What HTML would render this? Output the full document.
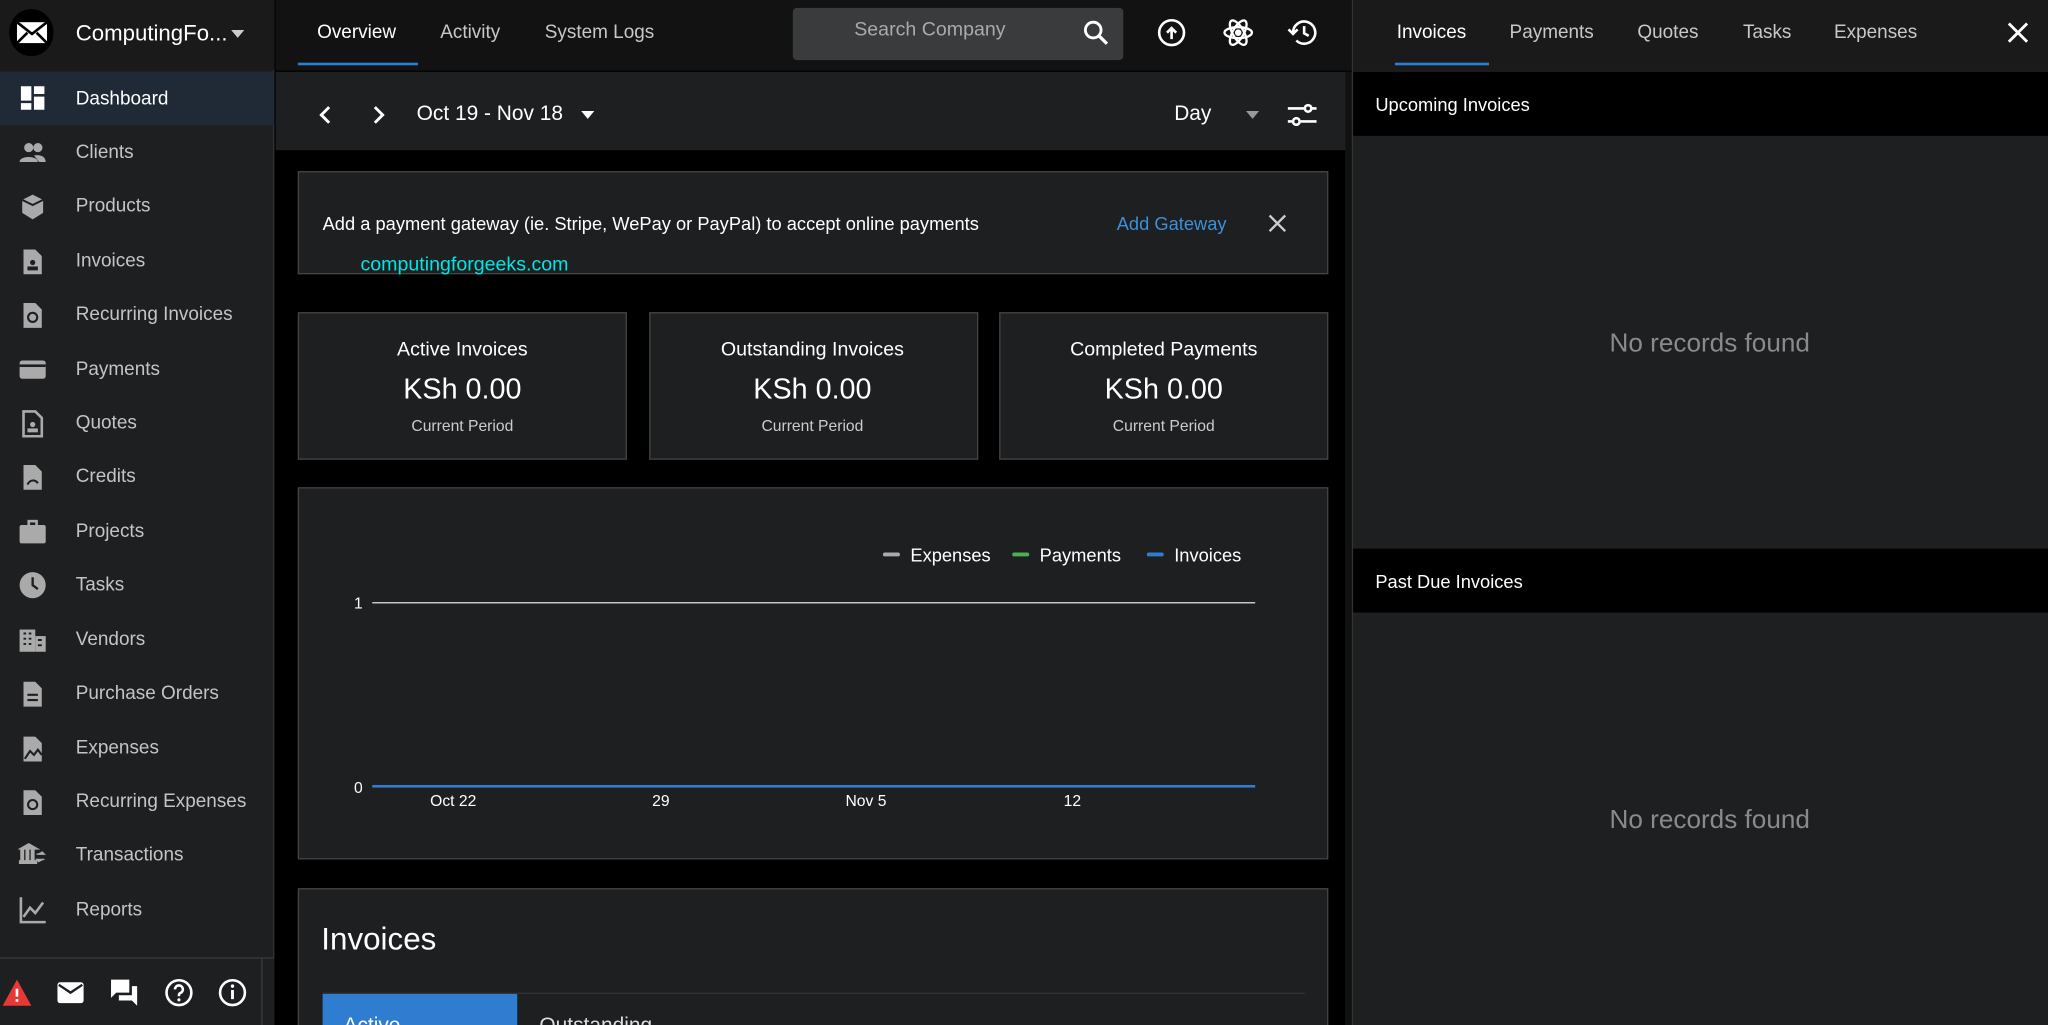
<!DOCTYPE html>
<html><head><meta charset="utf-8"><style>
*{box-sizing:border-box;margin:0;padding:0}
html,body{width:2048px;height:1025px;overflow:hidden;background:#000}
#w{position:absolute;left:0;top:0;width:1568px;height:785px;transform:scale(1.306122);transform-origin:0 0;font-family:"Liberation Sans",sans-serif;color:#fff;overflow:hidden;background:#000}
.a{position:absolute}
.t{position:absolute;white-space:nowrap;line-height:1}
.side{left:0;top:0;width:210px;height:785px;background:#1e1f21;border-right:1px solid #333}
.mi{position:absolute;left:58px;font-size:14.5px;color:#c4c4c4;transform:translateY(-50%)}
.ic{position:absolute;left:14px;width:22px;height:22px;transform:translateY(-50%)}
.card{position:absolute;background:#1e1f21;border:1px solid #444}
.tab{position:absolute;font-size:14.5px;color:#c8c8c8;top:25px;transform:translate(-50%,-50%);white-space:nowrap}
</style></head><body><div id="w">
<!-- sidebar -->
<div class="a side">
 <div class="a" style="left:0;top:0;width:210px;height:54px;background:#1a1a1b"></div>
 <div class="a" style="left:7px;top:7px;width:34px;height:36px;border-radius:50%;background:#000"></div>
 <svg class="a" style="left:12px;top:16px" width="25" height="18" viewBox="0 0 25 18"><rect x="1" y="1" width="23" height="16" fill="#fff"/><path d="M1 1 L12.5 10 L24 1 M1 17 L9 9 M24 17 L16 9" stroke="#000" stroke-width="2" fill="none"/></svg>
 <div class="t" style="left:58px;top:17px;font-size:17px;color:#fff">ComputingFo...</div>
 <div class="a" style="left:177px;top:23px;border:5px solid transparent;border-top:6px solid #ccc"></div>
 <div class="a" style="left:0;top:55px;width:210px;height:41px;background:#1f2a36"></div>
 <svg class="ic" style="top:75px" viewBox="0 0 22 22"><path d="M2 2h8v11H2zM12 2h8v6h-8zM12 10h8v10h-8zM2 15h8v5H2z" fill="#fff"/></svg>
 <div class="mi" style="top:76px;color:#fff">Dashboard</div>
 <svg class="ic" style="top:117px" viewBox="0 0 22 22"><circle cx="8" cy="7" r="3.5" fill="#aaa"/><circle cx="15" cy="7" r="3.5" fill="#aaa"/><path d="M1 18c0-5 14-5 14 0zM12 13c5-1 9 1 9 5h-5z" fill="#aaa"/></svg>
 <div class="mi" style="top:117px">Clients</div>
 <svg class="ic" style="top:158px" viewBox="0 0 22 22"><path d="M11 2l8 4v10l-8 5-8-5V6z" fill="#aaa"/><path d="M3 6l8 4 8-4" stroke="#1e1f21" stroke-width="1.5" fill="none"/></svg>
 <div class="mi" style="top:158px">Products</div>
 <svg class="ic" style="top:200px" viewBox="0 0 22 22"><path d="M4 2h9l5 5v14H4z" fill="#aaa"/><circle cx="11" cy="12" r="2" fill="#1e1f21"/><rect x="7" y="15" width="8" height="3" fill="#1e1f21"/></svg>
 <div class="mi" style="top:200px">Invoices</div>
 <svg class="ic" style="top:241px" viewBox="0 0 22 22"><path d="M4 2h9l5 5v14H4z" fill="#aaa"/><circle cx="11" cy="13" r="3.5" stroke="#1e1f21" stroke-width="1.6" fill="none"/></svg>
 <div class="mi" style="top:241px">Recurring Invoices</div>
 <svg class="ic" style="top:283px" viewBox="0 0 22 22"><rect x="1" y="4" width="20" height="14" rx="2" fill="#aaa"/><rect x="1" y="7" width="20" height="2" fill="#1e1f21"/></svg>
 <div class="mi" style="top:283px">Payments</div>
 <svg class="ic" style="top:324px" viewBox="0 0 22 22"><path d="M4 2h9l5 5v14H4z" fill="none" stroke="#aaa" stroke-width="2"/><circle cx="11" cy="12" r="2" fill="#aaa"/><rect x="7" y="15" width="8" height="3" fill="#aaa"/></svg>
 <div class="mi" style="top:324px">Quotes</div>
 <svg class="ic" style="top:365px" viewBox="0 0 22 22"><path d="M4 2h9l5 5v14H4z" fill="#aaa"/><path d="M7 17c2-4 6-4 8-1" stroke="#1e1f21" stroke-width="1.6" fill="none"/></svg>
 <div class="mi" style="top:365px">Credits</div>
 <svg class="ic" style="top:407px" viewBox="0 0 22 22"><rect x="1" y="6" width="20" height="14" rx="1.5" fill="#aaa"/><rect x="8" y="3" width="6" height="4" fill="none" stroke="#aaa" stroke-width="2"/></svg>
 <div class="mi" style="top:407px">Projects</div>
 <svg class="ic" style="top:448px" viewBox="0 0 22 22"><circle cx="11" cy="11" r="10" fill="#aaa"/><path d="M11 5v6l4 3" stroke="#1e1f21" stroke-width="1.8" fill="none"/></svg>
 <div class="mi" style="top:448px">Tasks</div>
 <svg class="ic" style="top:490px" viewBox="0 0 22 22"><rect x="1" y="3" width="12" height="17" fill="#aaa"/><rect x="13" y="8" width="8" height="12" fill="#aaa"/><path d="M4 6h2M8 6h2M4 10h2M8 10h2M4 14h2M8 14h2M15 11h3M15 15h3" stroke="#1e1f21" stroke-width="1.5"/></svg>
 <div class="mi" style="top:490px">Vendors</div>
 <svg class="ic" style="top:531px" viewBox="0 0 22 22"><path d="M4 2h9l5 5v14H4z" fill="#aaa"/><path d="M7 12h8M7 16h8" stroke="#1e1f21" stroke-width="1.6"/></svg>
 <div class="mi" style="top:531px">Purchase Orders</div>
 <svg class="ic" style="top:573px" viewBox="0 0 22 22"><path d="M4 2h9l5 5v14H4z" fill="#aaa"/><path d="M5 19l4-6 3 3 3-4 3 4" stroke="#1e1f21" stroke-width="1.6" fill="none"/></svg>
 <div class="mi" style="top:573px">Expenses</div>
 <svg class="ic" style="top:614px" viewBox="0 0 22 22"><path d="M4 2h9l5 5v14H4z" fill="#aaa"/><circle cx="11" cy="13" r="3.5" stroke="#1e1f21" stroke-width="1.6" fill="none"/></svg>
 <div class="mi" style="top:614px">Recurring Expenses</div>
 <svg class="ic" style="top:655px" viewBox="0 0 22 22"><path d="M1 6l7-4 7 4zM2 7h2v7H2zM6 7h2v7H6zM10 7h2v7h-2zM1 15h13v2H1zM14 10h6l-2-2M20 14h-6l2 2" fill="#aaa" stroke="#aaa" stroke-width="1"/></svg>
 <div class="mi" style="top:655px">Transactions</div>
 <svg class="ic" style="top:697px" viewBox="0 0 22 22"><path d="M2 1v19h19M4 16l5-7 4 4 6-8" stroke="#aaa" stroke-width="2" fill="none"/></svg>
 <div class="mi" style="top:697px">Reports</div>
 <div class="a" style="left:0;top:733px;width:210px;height:52px;background:#1e1f21;border-top:1px solid #3a3a3a"></div>
 <div class="a" style="left:200px;top:733px;width:1px;height:52px;background:#3a3a3a"></div>
 <svg class="a" style="left:1px;top:749px" width="24" height="22" viewBox="0 0 24 22"><path d="M12 1L23 21H1z" fill="#e53935"/><path d="M12 8v6M12 16v2" stroke="#fff" stroke-width="2"/></svg>
 <svg class="a" style="left:43px;top:751px" width="22" height="18" viewBox="0 0 22 18"><rect x="1" y="1" width="20" height="16" rx="2" fill="#fff"/><path d="M2 3l9 6 9-6" stroke="#1e1f21" stroke-width="1.8" fill="none"/></svg>
 <svg class="a" style="left:84px;top:749px" width="22" height="22" viewBox="0 0 22 22"><path d="M1 1h14v10H5l-4 4z" fill="#fff"/><path d="M17 6h4v15l-4-4H7v-4h10z" fill="#fff"/></svg>
 <svg class="a" style="left:126px;top:749px" width="22" height="22" viewBox="0 0 22 22"><circle cx="11" cy="11" r="9.5" stroke="#fff" stroke-width="2" fill="none"/><path d="M8 8.5a3 3 0 1 1 4 2.8c-1 .5-1 1-1 2.5" stroke="#fff" stroke-width="2" fill="none"/><circle cx="11" cy="16.5" r="1.2" fill="#fff"/></svg>
 <svg class="a" style="left:167px;top:749px" width="22" height="22" viewBox="0 0 22 22"><circle cx="11" cy="11" r="9.5" stroke="#fff" stroke-width="2" fill="none"/><path d="M11 9v7" stroke="#fff" stroke-width="2.2"/><circle cx="11" cy="6" r="1.3" fill="#fff"/></svg>
</div>
<!-- main top -->
<div class="a" style="left:211px;top:0;width:824px;height:54px;background:#121212"></div>
<div class="tab" style="left:273px;color:#fff">Overview</div>
<div class="a" style="left:228px;top:48px;width:92px;height:2px;background:#2f7dd1"></div>
<div class="tab" style="left:360px">Activity</div>
<div class="tab" style="left:459px">System Logs</div>
<div class="a" style="left:607px;top:6px;width:253px;height:40px;background:#3a3b3d;border-radius:3px"></div>
<div class="t" style="left:654px;top:15px;font-size:15px;color:#aaa">Search Company</div>
<svg class="a" style="left:828px;top:14px" width="22" height="22" viewBox="0 0 22 22"><circle cx="9" cy="9" r="6" stroke="#fff" stroke-width="2.2" fill="none"/><path d="M13.5 13.5l6 6" stroke="#fff" stroke-width="2.5"/></svg>
<svg class="a" style="left:886px;top:14px" width="22" height="22" viewBox="0 0 22 22"><circle cx="11" cy="11" r="9.5" stroke="#fff" stroke-width="2" fill="none"/><path d="M11 16V8M7.5 11L11 7.5 14.5 11" stroke="#fff" stroke-width="2" fill="none"/></svg>
<svg class="a" style="left:936px;top:13px" width="24" height="24" viewBox="0 0 24 24" fill="none" stroke="#fff" stroke-width="1.8"><ellipse cx="12" cy="12" rx="10.5" ry="4.2"/><ellipse cx="12" cy="12" rx="10.5" ry="4.2" transform="rotate(60 12 12)"/><ellipse cx="12" cy="12" rx="10.5" ry="4.2" transform="rotate(120 12 12)"/><circle cx="12" cy="12" r="1.6" fill="#fff"/></svg>
<svg class="a" style="left:985px;top:14px" width="24" height="22" viewBox="0 0 24 22" fill="none" stroke="#fff" stroke-width="2"><path d="M5 11a8.5 8.5 0 1 1 2.5 6"/><path d="M1.5 8.5L5 12l3.5-3.5"/><path d="M13.5 6v5.5l3.5 2"/></svg>
<!-- sub bar -->
<div class="a" style="left:211px;top:55px;width:824px;height:60px;background:#1e1f21"></div>
<svg class="a" style="left:242px;top:80px" width="14" height="16" viewBox="0 0 14 16"><path d="M10 2L4 8l6 6" stroke="#fff" stroke-width="2.2" fill="none"/></svg>
<svg class="a" style="left:283px;top:80px" width="14" height="16" viewBox="0 0 14 16"><path d="M4 2l6 6-6 6" stroke="#fff" stroke-width="2.2" fill="none"/></svg>
<div class="t" style="left:319px;top:80px;font-size:16px">Oct 19 - Nov 18</div>
<div class="a" style="left:445px;top:85px;border:5.5px solid transparent;border-top:6px solid #fff"></div>
<div class="t" style="left:899px;top:80px;font-size:16px">Day</div>
<div class="a" style="left:954px;top:85px;border:5.5px solid transparent;border-top:6px solid #999"></div>
<svg class="a" style="left:985px;top:77px" width="24" height="22" viewBox="0 0 24 22" fill="none" stroke="#fff" stroke-width="2"><path d="M1 6h13M19 6h4M1 16h4M10 16h13"/><circle cx="16.5" cy="6" r="2.5"/><circle cx="7.5" cy="16" r="2.5"/></svg>
<div class="a" style="left:1030px;top:55px;width:5px;height:730px;background:#111"></div>
<!-- banner -->
<div class="card" style="left:228px;top:131px;width:789px;height:79px"></div>
<div class="t" style="left:247px;top:164px;font-size:14px">Add a payment gateway (ie. Stripe, WePay or PayPal) to accept online payments</div>
<div class="t" style="left:855px;top:164px;font-size:14px;color:#3d8fd6">Add Gateway</div>
<svg class="a" style="left:970px;top:163px" width="16" height="16" viewBox="0 0 16 16"><path d="M2 2l12 12M14 2L2 14" stroke="#ccc" stroke-width="1.8"/></svg>
<div class="t" style="left:276px;top:195px;font-size:15px;color:#00e5e5">computingforgeeks.com</div>
<!-- stat cards -->
<div class="card" style="left:228px;top:239px;width:252px;height:113px"></div>
<div class="card" style="left:497px;top:239px;width:252px;height:113px"></div>
<div class="card" style="left:765px;top:239px;width:252px;height:113px"></div>
<div class="t" style="left:354px;top:260px;font-size:15px;transform:translateX(-50%)">Active Invoices</div>
<div class="t" style="left:354px;top:287px;font-size:22px;transform:translateX(-50%)">KSh 0.00</div>
<div class="t" style="left:354px;top:320px;font-size:12px;color:#ccc;transform:translateX(-50%)">Current Period</div>
<div class="t" style="left:622px;top:260px;font-size:15px;transform:translateX(-50%)">Outstanding Invoices</div>
<div class="t" style="left:622px;top:287px;font-size:22px;transform:translateX(-50%)">KSh 0.00</div>
<div class="t" style="left:622px;top:320px;font-size:12px;color:#ccc;transform:translateX(-50%)">Current Period</div>
<div class="t" style="left:891px;top:260px;font-size:15px;transform:translateX(-50%)">Completed Payments</div>
<div class="t" style="left:891px;top:287px;font-size:22px;transform:translateX(-50%)">KSh 0.00</div>
<div class="t" style="left:891px;top:320px;font-size:12px;color:#ccc;transform:translateX(-50%)">Current Period</div>
<!-- chart -->
<div class="card" style="left:228px;top:373px;width:789px;height:285px"></div>
<div class="a" style="left:676px;top:423px;width:13px;height:3px;background:#aaa;border-radius:2px"></div>
<div class="t" style="left:697px;top:418px;font-size:14px">Expenses</div>
<div class="a" style="left:775px;top:423px;width:13px;height:3px;background:#4caf50;border-radius:2px"></div>
<div class="t" style="left:796px;top:418px;font-size:14px">Payments</div>
<div class="a" style="left:878px;top:423px;width:13px;height:3px;background:#2f7dd1;border-radius:2px"></div>
<div class="t" style="left:899px;top:418px;font-size:14px">Invoices</div>
<div class="t" style="left:271px;top:456px;font-size:12px">1</div>
<div class="a" style="left:285px;top:461px;width:676px;height:1px;background:#ddd"></div>
<div class="t" style="left:271px;top:597px;font-size:12px">0</div>
<div class="a" style="left:285px;top:601px;width:676px;height:2px;background:#2f7dd1"></div>
<div class="t" style="left:347px;top:607px;font-size:12px;transform:translateX(-50%)">Oct 22</div>
<div class="t" style="left:506px;top:607px;font-size:12px;transform:translateX(-50%)">29</div>
<div class="t" style="left:663px;top:607px;font-size:12px;transform:translateX(-50%)">Nov 5</div>
<div class="t" style="left:821px;top:607px;font-size:12px;transform:translateX(-50%)">12</div>
<!-- invoices card -->
<div class="card" style="left:228px;top:680px;width:789px;height:120px"></div>
<div class="t" style="left:246px;top:708px;font-size:24px">Invoices</div>
<div class="a" style="left:247px;top:760px;width:752px;height:1px;background:#333"></div>
<div class="a" style="left:247px;top:761px;width:149px;height:30px;background:#2f7dd1"></div>
<div class="t" style="left:263px;top:778px;font-size:16px">Active</div>
<div class="t" style="left:413px;top:778px;font-size:16px;color:#ddd">Outstanding</div>
<!-- right panel -->
<div class="a" style="left:1035px;top:0;width:533px;height:785px;background:#1e1f21;border-left:1px solid #333"></div>
<div class="a" style="left:1036px;top:0;width:532px;height:54px;background:#1a1a1b"></div>
<div class="tab" style="left:1096px;color:#fff">Invoices</div>
<div class="a" style="left:1068px;top:48px;width:72px;height:2px;background:#2f7dd1"></div>
<div class="tab" style="left:1188px">Payments</div>
<div class="tab" style="left:1277px">Quotes</div>
<div class="tab" style="left:1353px">Tasks</div>
<div class="tab" style="left:1436px">Expenses</div>
<svg class="a" style="left:1537px;top:17px" width="16" height="16" viewBox="0 0 16 16"><path d="M1 1l14 14M15 1L1 15" stroke="#fff" stroke-width="2.2"/></svg>
<div class="a" style="left:1036px;top:55px;width:532px;height:49px;background:#000"></div>
<div class="t" style="left:1053px;top:73px;font-size:14px">Upcoming Invoices</div>
<div class="t" style="left:1309px;top:253px;font-size:20px;color:#8a8a8a;transform:translateX(-50%)">No records found</div>
<div class="a" style="left:1036px;top:420px;width:532px;height:49px;background:#000"></div>
<div class="t" style="left:1053px;top:438px;font-size:14px">Past Due Invoices</div>
<div class="t" style="left:1309px;top:618px;font-size:20px;color:#8a8a8a;transform:translateX(-50%)">No records found</div>
</div></body></html>
